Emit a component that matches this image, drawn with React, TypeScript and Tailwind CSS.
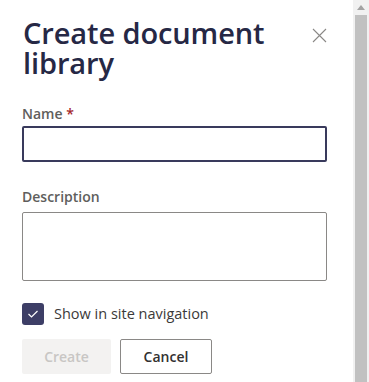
import React from "react";

export default function App() {
  return (
    <div className="flex h-[382px] w-[369px] overflow-hidden bg-white" style={{ fontFamily: '"Open Sans", "Noto Sans", sans-serif' }}>
      <div className="flex-1 pl-[22px] pr-[26px]">
        <div className="flex items-start justify-between pt-[18px]">
          <h1 className="w-[270px] pl-[1px] text-[29px] font-semibold leading-[30px] tracking-[-0.1px] text-[#262845]">
            Create document library
          </h1>
          <button className="mt-[10px] text-[#8a8886]">
            <svg width="15" height="15" viewBox="0 0 15 15">
              <path d="M1 1 L14 14 M14 1 L1 14" stroke="#8a8886" strokeWidth="1.1" fill="none" />
            </svg>
          </button>
        </div>
        <div className="mt-[26px] text-[14px] font-semibold leading-[20px] text-[#605e5c]">
          Name <span className="text-[#a4262c]">*</span>
        </div>
        <div className="mt-[2px] h-[36px] w-[305px] rounded-[2px] border-2 border-[#393a5c]"></div>
        <div className="mt-[25px] text-[14px] font-semibold leading-[20px] text-[#605e5c]">Description</div>
        <div className="mt-[5px] h-[69px] w-[305px] rounded-[2px] border border-[#8a8886]"></div>
        <div className="mt-[22px] flex items-center">
          <div className="flex h-[22px] w-[22px] items-center justify-center rounded-[3px] bg-[#3d3e66]">
            <svg width="12" height="10" viewBox="0 0 12 10">
              <path d="M1.5 5 L4.5 8 L10.5 2" stroke="white" strokeWidth="1.2" fill="none" />
            </svg>
          </div>
          <span className="ml-[10px] text-[14.5px] leading-[20px] text-[#3b3a39]">Show in site navigation</span>
        </div>
        <div className="mt-[14px] flex gap-[9px]">
          <div className="flex h-[35px] w-[89px] items-center justify-center rounded-[2px] bg-[#f3f2f1] text-[14px] font-semibold text-[#c8c6c4]">
            Create
          </div>
          <div className="flex h-[35px] w-[92px] items-center justify-center rounded-[2px] border border-[#8a8886] text-[14px] font-semibold text-[#323130]">
            Cancel
          </div>
        </div>
      </div>
      <div className="flex w-[16px] flex-col bg-[#f1f1f1]">
        <div className="flex h-[15px] items-center justify-center">
          <svg width="8" height="5" viewBox="0 0 8 5">
            <path d="M0 5 L4 0 L8 5 Z" fill="#a3a3a3" />
          </svg>
        </div>
        <div className="mx-[2px] flex-1 bg-[#c1c1c1]"></div>
      </div>
    </div>
  );
}
